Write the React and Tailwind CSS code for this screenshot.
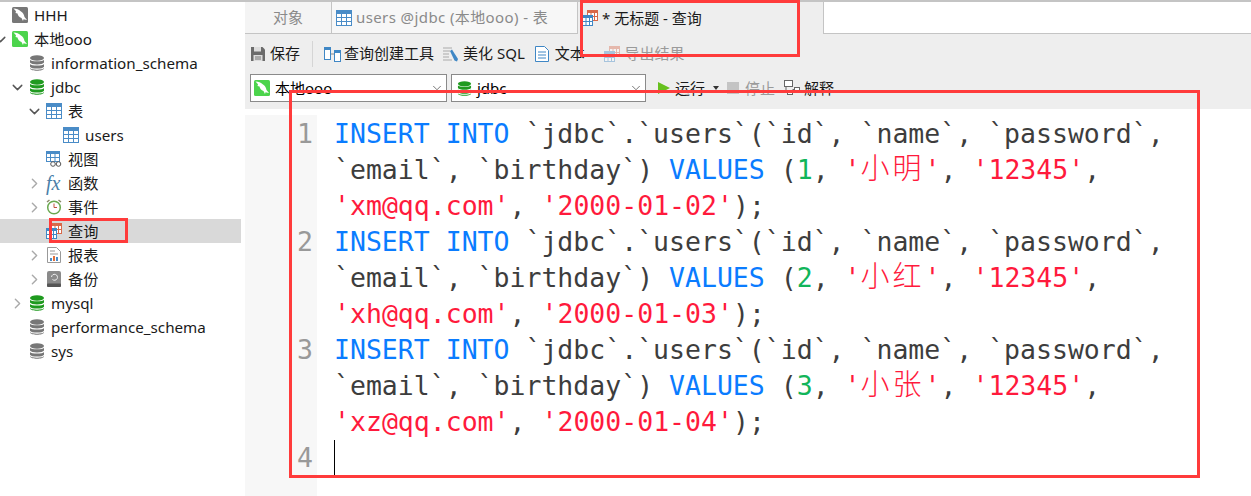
import React from "react";
import { ChevronDown, ChevronRight } from "lucide-react";

const uiFont = { fontFamily: '"Noto Sans", "Noto Sans CJK SC", sans-serif' };

const Dolphin = ({ bg = "#4cd44c" }) => (
  <svg width="16" height="16" viewBox="0 0 16 16" className="shrink-0">
    <rect width="16" height="16" rx="1.5" fill={bg} />
    <path d="M1.500 1.500c3 0 5.500 1 7.500 3 2 1.200 3 3 3.500 5.500l2.500 3-3.500-.8-.5 1.800-1.500-3C7 10.500 6 8.500 5.500 6.500L3.500 6 4 4.300z" fill="#fff" />
  </svg>
);

const Db = ({ color = "#777", size = 16 }) => (
  <svg width={size} height={size} viewBox="0 0 16 16" className="shrink-0">
    <ellipse cx="8" cy="3" rx="7" ry="2.800" fill={color} />
    <path d="M1 4.800c1 2 13 2 14 0V7.500c-1 2.500-13 2.500-14 0zM1 9c1 2 13 2 14 0v2.700c-1 2.500-13 2.500-14 0z" fill={color} />
    <path d="M1 13c1 2.200 13 2.200 14 0v.5c-1 3-13 3-14 0z" fill={color} />
  </svg>
);

const TableIcon = () => (
  <svg width="16" height="16" viewBox="0 0 16 16" className="shrink-0">
    <rect x=".5" y=".5" width="15" height="15" fill="#fff" stroke="#4a8cc7" />
    <rect x="0" y="0" width="16" height="4" fill="#4a8cc7" />
    <path d="M5.500 4v11M10.500 4v11M1 7.500h14M1 11.500h14" stroke="#4a8cc7" />
  </svg>
);

const ViewIcon = () => (
  <svg width="16" height="16" viewBox="0 0 16 16" className="shrink-0">
    <rect x=".5" y=".5" width="13" height="10" fill="#fff" stroke="#4a8cc7" />
    <rect x="0" y="0" width="14" height="3" fill="#4a8cc7" />
    <path d="M4.500 3v7M9 3v7M1 6.500h12" stroke="#4a8cc7" />
    <circle cx="7" cy="13" r="2.300" fill="#fff" stroke="#555" />
    <circle cx="12.500" cy="13" r="2.300" fill="#fff" stroke="#555" />
  </svg>
);

const QueryIcon = ({ dim = false }) => (
  <svg width="16" height="16" viewBox="0 0 16 16" className="shrink-0" opacity={dim ? 0.4 : 1}>
    <rect x="5.500" y=".5" width="10" height="10" fill="#fff" stroke="#d9694a" />
    <rect x="5" y="0" width="11" height="3" fill="#d9694a" />
    <path d="M9 3v7M12.500 3v7M6 6.500h9" stroke="#d9694a" />
    <rect x=".5" y="5.500" width="10" height="10" fill="#fff" stroke="#3f87c5" />
    <rect x="0" y="5" width="11" height="3" fill="#3f87c5" />
    <path d="M4 8v7M7.500 8v7M1 11.500h9" stroke="#3f87c5" />
  </svg>
);

const ClockIcon = () => (
  <svg width="16" height="16" viewBox="0 0 16 16" className="shrink-0">
    <circle cx="8" cy="8.500" r="6.300" fill="#fff" stroke="#6aa84f" strokeWidth="1.500" />
    <path d="M8 4.500v4h3" stroke="#c0503c" fill="none" />
    <path d="M1 3l2.500-2M15 3l-2.500-2" stroke="#8a8a6a" strokeWidth="1.500" />
  </svg>
);

const ReportIcon = () => (
  <svg width="16" height="16" viewBox="0 0 16 16" className="shrink-0">
    <path d="M1.500.5h9l4 4v11h-13z" fill="#fff" stroke="#999" />
    <path d="M4 4h5M4 7h8" stroke="#999" />
    <rect x="4" y="11" width="2" height="3" fill="#4a8cc7" />
    <rect x="7" y="9" width="2" height="5" fill="#e0703c" />
    <rect x="10" y="10" width="2" height="4" fill="#4a8cc7" />
  </svg>
);

const BackupIcon = () => (
  <svg width="16" height="16" viewBox="0 0 16 16" className="shrink-0">
    <rect x="1" y="0" width="14" height="16" rx="2" fill="#8a8a8a" />
    <rect x="1" y="12.500" width="14" height="3.500" rx="1" fill="#555" />
    <path d="M5.500 6a3 3 0 1 1 1 2.500" fill="none" stroke="#eee" />
  </svg>
);

const SaveIcon = () => (
  <svg width="16" height="16" viewBox="0 0 16 16" className="shrink-0">
    <path d="M1 1h11.500L15 3.500V15H1z" fill="#6b6b6b" />
    <rect x="4" y="1" width="7" height="4.500" fill="#ddd" />
    <rect x="3.500" y="9" width="9" height="6" fill="#ddd" />
    <path d="M5 11h6M5 13h6" stroke="#777" />
  </svg>
);

const BuilderIcon = () => (
  <svg width="18" height="16" viewBox="0 0 18 16" className="shrink-0">
    <rect x=".5" y="1.500" width="6" height="12" fill="#fff" stroke="#3f87c5" />
    <rect x="0" y="1" width="7" height="3" fill="#3f87c5" />
    <rect x="10.500" y="4.500" width="6" height="11" fill="#fff" stroke="#3f87c5" />
    <rect x="10" y="4" width="7" height="3" fill="#3f87c5" />
    <path d="M7 8h3" stroke="#888" />
  </svg>
);

const BeautifyIcon = () => (
  <svg width="16" height="16" viewBox="0 0 16 16" className="shrink-0">
    <path d="M0 2h9M0 5h7M0 8h6M0 11h6M0 14h9" stroke="#aaa" />
    <path d="M7 5l2-1.500 6 9.500-1 2.500-2.500-1z" fill="#3f87c5" />
  </svg>
);

const TextIcon = () => (
  <svg width="14" height="16" viewBox="0 0 14 16" className="shrink-0">
    <path d="M.5.500h9l4 4v11H.5z" fill="#fff" stroke="#3f87c5" />
    <path d="M3 6h8M3 9h8M3 12h8" stroke="#3f87c5" />
  </svg>
);

const ExplainIcon = () => (
  <svg width="16" height="16" viewBox="0 0 16 16" className="shrink-0">
    <rect x=".5" y=".5" width="8" height="6" fill="#fff" stroke="#666" />
    <rect x="3.500" y="10.500" width="5" height="4" fill="#fff" stroke="#666" />
    <rect x="10.500" y="7.500" width="5" height="4" fill="#fff" stroke="#666" />
    <path d="M2 6.500v6h1.500M8.500 9.500h2" fill="none" stroke="#666" />
  </svg>
);

const treeRows = [
  { label: "HHH", indent: 12, icon: <Dolphin bg="#777" /> },
  { label: "本地ooo", indent: 12, arrow: "down", icon: <Dolphin /> },
  { label: "information_schema", indent: 29, icon: <Db /> },
  { label: "jdbc", indent: 29, arrow: "down", icon: <Db color="#1f9a1f" /> },
  { label: "表", indent: 46, arrow: "down", icon: <TableIcon /> },
  { label: "users", indent: 63, icon: <TableIcon /> },
  { label: "视图", indent: 46, icon: <ViewIcon /> },
  {
    label: "函数",
    indent: 46,
    arrow: "right",
    icon: <span className="w-4 shrink-0 text-[20px] leading-none italic text-[#4a7fa8] [font-family:'Liberation_Serif',serif]">fx</span>,
  },
  { label: "事件", indent: 46, arrow: "right", icon: <ClockIcon /> },
  { label: "查询", indent: 46, icon: <QueryIcon />, selected: true },
  { label: "报表", indent: 46, arrow: "right", icon: <ReportIcon /> },
  { label: "备份", indent: 46, arrow: "right", icon: <BackupIcon /> },
  { label: "mysql", indent: 29, arrow: "right", icon: <Db color="#1f9a1f" /> },
  { label: "performance_schema", indent: 29, icon: <Db /> },
  { label: "sys", indent: 29, icon: <Db /> },
];

const TreeRow = ({ row }) => (
  <div
    className={`relative flex h-6 items-center gap-[6px] text-[15.200px] text-[#1a1a1a] ${row.selected ? "bg-[#d9d9d9]" : ""}`}
    style={{ paddingLeft: row.indent }}
  >
    {row.arrow === "down" && (
      <ChevronDown size={17} strokeWidth={2} className="absolute text-[#555]" style={{ left: row.indent - 20 }} />
    )}
    {row.arrow === "right" && (
      <ChevronRight size={17} strokeWidth={2} className="absolute text-[#aaa]" style={{ left: row.indent - 20 }} />
    )}
    {row.icon}
    <span>{row.label}</span>
  </div>
);

const Tool = ({ icon, label, dim, className = "" }) => (
  <div className={`flex items-center ${dim ? "text-[#9a9a9a]" : "text-[#1a1a1a]"} ${className}`}>
    {icon}
    <span>{label}</span>
  </div>
);

const Select = ({ icon, label, className }) => (
  <div className={`flex h-7 items-center gap-[5px] border border-[#8a8a8a] bg-white pr-[2px] text-[15px] ${className}`}>
    {icon}
    <span className="flex-1">{label}</span>
    <ChevronDown size={14} strokeWidth={1.5} className="text-[#666]" />
  </div>
);

const K = ({ children }) => <span className="text-[#0a7cff]">{children}</span>;
const S = ({ children }) => <span className="text-[#ff1a3c]">{children}</span>;
const N = ({ children }) => <span className="text-[#11b55a]">{children}</span>;
const Cjk = ({ children }) => (
  <span className="text-[29px] leading-[0] font-light tracking-[3px] text-[#ff1a3c] [font-family:'Noto_Sans_CJK_SC',sans-serif]">{children}</span>
);

const inserts = [
  { id: "1", name: "小明", mail: "xm@qq.com", date: "2000-01-02" },
  { id: "2", name: "小红", mail: "xh@qq.com", date: "2000-01-03" },
  { id: "3", name: "小张", mail: "xz@qq.com", date: "2000-01-04" },
];

const CodeLine = ({ children }) => (
  <div className="h-9 overflow-visible whitespace-pre leading-9 text-[#3d3d3d]">{children}</div>
);

export default function App() {
  return (
    <div className="relative flex h-[496px] w-[1251px] overflow-hidden bg-white" style={uiFont}>
      {/* arbol de conexiones */}
      <aside className="w-[245px] shrink-0 border-t-2 border-[#c4c4c4] pt-px">
        <div className="w-[241px]">
          {treeRows.map((row) => (
            <TreeRow key={row.label} row={row} />
          ))}
        </div>
      </aside>

      <main className="flex min-w-0 flex-1 flex-col">
        {/* pestañas */}
        <div className="flex h-[34px] border-t-2 border-[#c4c4c4] bg-[#eeeeee] text-[15px]">
          <div className="flex w-[87px] items-center justify-center border-r border-b border-[#c4c4c4] bg-[#f4f4f4] text-[#8a8a8a]">对象</div>
          <div className="flex w-[246px] items-center gap-[4px] border-r border-b border-[#c4c4c4] bg-[#f7f7f7] pl-[4px] text-[#8a8a8a]">
            <TableIcon />
            <span className="tracking-[0.4px]">users @jdbc (本地ooo) - 表</span>
          </div>
          <div className="flex w-[245px] items-center gap-[4px] pl-[4px] text-[#1a1a1a]">
            <QueryIcon />
            <span>* 无标题 - 查询</span>
          </div>
          <div className="flex-1 border-b border-l border-[#c4c4c4] bg-white" />
        </div>

        {/* barra de herramientas */}
        <div className="flex h-[39px] items-center bg-[#eeeeee] pl-[5px] text-[15px]">
          <Tool icon={<SaveIcon />} label="保存" className="gap-[4px]" />
          <div className="ml-3 h-[26px] w-px bg-[#d5d5d5]" />
          <Tool icon={<BuilderIcon />} label="查询创建工具" className="ml-[11px] gap-[2px]" />
          <Tool icon={<BeautifyIcon />} label="美化 SQL" className="ml-[9px] gap-[4px]" />
          <Tool icon={<TextIcon />} label="文本" className="ml-[10px] gap-[6px]" />
          <span className="ml-2 text-[#333]">-</span>
          <Tool icon={<QueryIcon dim />} label="导出结果" dim className="ml-[6px] gap-[5px]" />
        </div>

        <div className="flex h-[36px] items-start gap-1 bg-[#eeeeee] pl-[5px] pt-px text-[15px]">
          <Select icon={<Dolphin />} label="本地ooo" className="w-[197px] pl-[3px]" />
          <Select icon={<Db color="#1f9a1f" size={15} />} label="jdbc" className="w-[195px] pl-[5px]" />
          <div className="ml-2 flex h-7 items-center">
            <Tool icon={<span className="h-0 w-0 border-y-[6px] border-l-[12px] border-y-transparent border-l-[#66c01e]" />} label="运行" className="gap-[5px]" />
            <span className="ml-2 h-0 w-0 border-x-[3px] border-t-[4px] border-x-transparent border-t-[#333]" />
            <Tool icon={<span className="h-3 w-3 bg-[#c4c4c4]" />} label="停止" dim className="ml-2 gap-[6px]" />
            <Tool icon={<ExplainIcon />} label="解释" className="ml-[9px] gap-[4px]" />
          </div>
        </div>

        {/* editor */}
        <div className="flex min-h-0 flex-1 text-[26.500px] [font-family:'DejaVu_Sans_Mono',monospace]">
          <div className="mt-[6px] w-[72px] shrink-0 bg-[#f7f7f7] pt-px pr-[4px] text-right text-[#999]">
            {["1", "", "", "2", "", "", "3", "", "", "4"].map((num, i) => (
              <div key={i} className="h-9 leading-9">{num}</div>
            ))}
          </div>
          <div className="pt-[7px] pl-[17px]">
            {inserts.map((row) => (
              <React.Fragment key={row.id}>
                <CodeLine>
                  <K>INSERT INTO</K> `jdbc`.`users`(`id`, `name`, `password`,
                </CodeLine>
                <CodeLine>
                  `email`, `birthday`) <K>VALUES</K> (<N>{row.id}</N>, <S>'</S>
                  <Cjk>{row.name}</Cjk>
                  <S>'</S>, <S>'12345'</S>,
                </CodeLine>
                <CodeLine>
                  <S>'{row.mail}'</S>, <S>'{row.date}'</S>);
                </CodeLine>
              </React.Fragment>
            ))}
            <div className="h-9 w-px bg-black" />
          </div>
        </div>
      </main>

      {/* marcas rojas sobre la captura */}
      <div className="pointer-events-none absolute left-[289px] top-[90px] h-[388px] w-[911px] border-[3px] border-[#ff3b3b]" />
      <div className="pointer-events-none absolute left-[580px] top-0 h-[57px] w-[220px] border-[3px] border-[#ff3b3b]" />
      <div className="pointer-events-none absolute left-[49px] top-[218px] h-[25px] w-[79px] border-[3px] border-[#ff3b3b]" />
    </div>
  );
}
